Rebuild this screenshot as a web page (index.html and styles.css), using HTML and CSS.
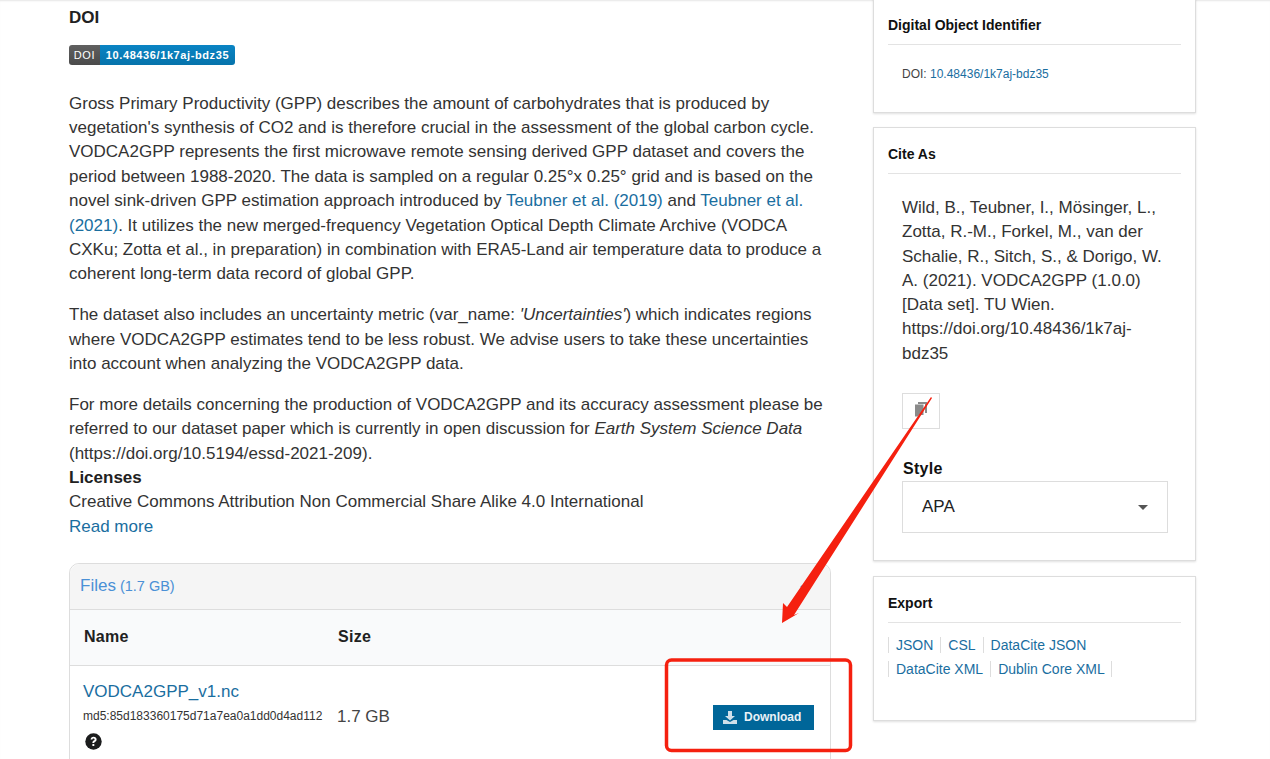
FILE: index.html
```html
<!DOCTYPE html>
<html lang="en">
  <head>
    <meta charset="UTF-8" />
    <title>VODCA2GPP</title>
    <link rel="stylesheet" href="styles.css">
  </head>
  <body>
    <div class="page">
      <main class="main">
        <h2 class="doi-title">DOI</h2>
        <div class="badge"><span class="badge-key">DOI</span><span class="badge-val">10.48436/1k7aj-bdz35</span></div>

        <p>Gross Primary Productivity (GPP) describes the amount of carbohydrates that is produced by vegetation's synthesis of CO2 and is therefore crucial in the assessment of the global carbon cycle. VODCA2GPP represents the first microwave remote sensing derived GPP dataset and covers the period between 1988-2020. The data is sampled on a regular 0.25°x 0.25° grid and is based on the novel sink-driven GPP estimation approach introduced by <a href="#">Teubner et al. (2019)</a> and <a href="#">Teubner et al. (2021)</a>. It utilizes the new merged-frequency Vegetation Optical Depth Climate Archive (VODCA CXKu; Zotta et al., in preparation) in combination with ERA5-Land air temperature data to produce a coherent long-term data record of global GPP.</p>
        <p>The dataset also includes an uncertainty metric (var_name: <em>'Uncertainties'</em>) which indicates regions where VODCA2GPP estimates tend to be less robust. We advise users to take these uncertainties into account when analyzing the VODCA2GPP data.</p>
        <p class="tight">For more details concerning the production of VODCA2GPP and its accuracy assessment please be referred to our dataset paper which is currently in open discussion for <em>Earth System Science Data</em> (https://doi.org/10.5194/essd-2021-209).</p>
        <div class="license-title">Licenses</div>
        <div class="license-text">Creative Commons Attribution Non Commercial Share Alike 4.0 International</div>
        <a class="read-more" href="#">Read more</a>

        <section class="files">
          <div class="files-head">
            <span class="files-title">Files</span> <span class="files-size">(1.7 GB)</span>
            <svg class="chevron" width="10" height="6" viewBox="0 0 10 6"><path d="M1 1l4 4 4-4" fill="none" stroke="#4a90d6" stroke-width="2"/></svg>
          </div>
          <div class="files-cols">
            <div class="col-name">Name</div>
            <div class="col-size">Size</div>
          </div>
          <div class="files-row">
            <div class="col-name">
              <a class="file-link" href="#">VODCA2GPP_v1.nc</a>
              <div class="md5">md5:85d183360175d71a7ea0a1dd0d4ad112</div>
              <svg class="help" width="17" height="17" viewBox="0 0 17 17">
                <circle cx="8.5" cy="8.5" r="8.2" fill="#1b1c1d"/>
                <path d="M5.6 6.6c0-1.700 1.300-2.800 3-2.800s3 1 3 2.600c0 1.200-.7 1.800-1.500 2.300-.6.4-.8.6-.8 1.200H7.400c0-1.200.4-1.800 1.200-2.300.7-.4 1-.7 1-1.200 0-.6-.5-1-1.100-1-.7 0-1.100.5-1.100 1.200z" fill="#fff"/>
                <rect x="7.400" y="11" width="1.900" height="2" fill="#fff"/>
              </svg>
            </div>
            <div class="col-size file-size">1.7 GB</div>
            <a class="download" href="#">
              <svg width="14" height="13" viewBox="0 0 14 13"><path d="M5 0h4v5h3L7 9.500 2 5h3z" fill="#cfe0ea"/><path d="M0 9h3.500L7 11l3.500-2H14v4H0z" fill="#cfe0ea"/></svg>
              Download
            </a>
          </div>
        </section>
      </main>

      <aside class="side">
        <section class="card card-doi">
          <h3 class="card-title">Digital Object Identifier</h3>
          <div class="doi-line">DOI: <a href="#">10.48436/1k7aj-bdz35</a></div>
        </section>
        <section class="card card-cite">
          <h3 class="card-title">Cite As</h3>
          <div class="citation">Wild, B., Teubner, I., Mösinger, L., Zotta, R.-M., Forkel, M., van der Schalie, R., Sitch, S., &amp; Dorigo, W. A. (2021). VODCA2GPP (1.0.0) [Data set]. TU Wien. https://doi.org/10.48436/1k7aj-bdz35</div>
          <button class="copy" type="button" aria-label="Copy">
            <svg width="14" height="15" viewBox="0 0 14 15"><path d="M4 0h9v11h-2V2H4z" fill="#8a8a8a"/><path d="M1 2.500h8.500V13H5l-1.500 1.500H1z" fill="#8a8a8a"/></svg>
          </button>
          <label class="style-label">Style</label>
          <div class="select"><span>APA</span><i class="caret"></i></div>
        </section>
        <section class="card card-export">
          <h3 class="card-title">Export</h3>
          <ul class="export-list">
            <li><a href="#">JSON</a></li>
            <li><a href="#">CSL</a></li>
            <li><a href="#">DataCite JSON</a></li>
            <li><a href="#">DataCite XML</a></li>
            <li><a href="#">Dublin Core XML</a></li>
          </ul>
        </section>
      </aside>
    </div>

    <!-- red markup drawn over the screenshot -->
    <svg class="markup" width="1270" height="759" viewBox="0 0 1270 759">
      <rect x="666.500" y="660" width="184" height="90.500" rx="5" fill="none" stroke="#f5200f" stroke-width="3.500"/>
      <path d="M931 397L932 398 794 615 799 613 782 623 783 603 787 607z" fill="#f5200f"/>
    </svg>
  </body>
</html>
```

FILE: styles.css
```css
* {
  box-sizing: border-box;
}

html,
body {
  height: 759px;
  margin: 0;
  overflow: hidden;
}

body {
  font-family: "Liberation Sans", Arial, sans-serif;
  font-size: 17px;
  color: #333;
  background-color: #fff;
  box-shadow: inset 0 2px 2px -1px rgba(0, 0, 0, 0.1);
}

a {
  color: #1a6e9f;
  text-decoration: none;
}

.page {
  display: flex;
  align-items: flex-start;
  padding-left: 69px;
}

/* main column */
.main {
  width: 762px;
  padding-top: 9px;
}

.doi-title {
  margin: 0 0 18px;
  font-size: 17px;
  line-height: 18px;
  font-weight: bold;
  color: #212121;
}

.badge {
  display: flex;
  width: 166px;
  height: 20px;
  margin-bottom: 26.5px;
  border-radius: 3px;
  overflow: hidden;
  font-size: 11px;
  line-height: 20px;
  color: #fff;
  letter-spacing: 0.6px;
}

.badge-key {
  width: 31px;
  text-align: center;
  background: linear-gradient(#606060, #4a4a4a);
}

.badge-val {
  width: 135px;
  text-align: center;
  font-weight: bold;
  background: linear-gradient(#0a84c4, #0673ab);
}

p {
  margin: 0 0 16.5px;
  line-height: 24.4px;
}

p.tight {
  margin-bottom: -0.5px;
}

.license-title {
  font-weight: bold;
  line-height: 24.4px;
  color: #212121;
}

.license-text,
.read-more {
  display: block;
  line-height: 24.4px;
}

/* files table */
.files {
  margin-top: 24px;
  border: 1px solid #ddd;
  border-radius: 10px 10px 0 0;
  height: 400px;
}

.files-head {
  display: flex;
  align-items: baseline;
  gap: 4px;
  height: 46px;
  padding: 12px 10px 0;
  background-color: #f5f5f5;
  border-bottom: 1px solid #ddd;
  border-radius: 10px 10px 0 0;
  color: #4a90d6;
}

.files-title {
  font-size: 17px;
}

.files-size {
  font-size: 14.5px;
}

.chevron {
  margin-left: auto;
  margin-right: 10px;
}

.files-cols {
  display: flex;
  align-items: center;
  height: 56px;
  background-color: #f9fafb;
  border-bottom: 1px solid #ddd;
  font-weight: bold;
  font-size: 16px;
  letter-spacing: 0.3px;
  color: #212121;
}

.col-name {
  width: 267px;
  padding-left: 13px;
}

.files-cols .col-name {
  width: 268px;
  padding-left: 14px;
}

.col-size {
  width: 180px;
}

.files-row {
  display: flex;
  padding-top: 15px;
}

.file-link {
  display: block;
  line-height: 21px;
}

.md5 {
  margin-top: 6px;
  font-size: 12px;
  line-height: 16px;
  white-space: nowrap;
}

.help {
  display: block;
  margin: 9px 0 0 2px;
}

.file-size {
  padding-top: 26px;
  color: #444;
}

.download {
  display: flex;
  align-items: center;
  gap: 7px;
  flex-shrink: 0;
  width: 101px;
  height: 25px;
  margin: 24px 0 0 196px;
  padding: 0 13px 0 10px;
  background-color: #006699;
  color: #eaf2f7;
  font-size: 12px;
  font-weight: bold;
}

.download svg {
  flex-shrink: 0;
}

/* sidebar */
.side {
  display: flex;
  flex-direction: column;
  width: 323px;
  margin-left: 42px;
  margin-top: -20px;
  gap: 14px;
}

.card {
  padding: 0 14px;
  border: 1px solid #ddd;
  box-shadow: 0 1px 2px rgba(0, 0, 0, 0.12);
  background-color: #fff;
}

.card-doi {
  height: 133px;
  padding-top: 37px;
}

.card-cite {
  height: 434px;
  padding-top: 19px;
}

.card-export {
  height: 145px;
  margin-top: 1px;
  padding-top: 19px;
}

.card-title {
  margin: 0;
  padding-bottom: 11px;
  border-bottom: 1px solid #e3e3e3;
  font-size: 14px;
  line-height: 15px;
  font-weight: bold;
  color: #111;
}

.doi-line {
  margin: 21px 0 0 14px;
  font-size: 12px;
  line-height: 16px;
  color: #444;
}

.citation {
  width: 266px;
  margin: 22px 0 0 14px;
  line-height: 24.3px;
}

.copy {
  display: block;
  width: 38px;
  height: 36px;
  margin: 27px 0 0 14px;
  padding: 0;
  border: 1px solid #ddd;
  background: #fff;
}

.style-label {
  display: block;
  margin: 31px 0 3px 15px;
  font-weight: bold;
  font-size: 16px;
  letter-spacing: 0.3px;
  line-height: 18px;
  color: #111;
}

.select {
  display: flex;
  align-items: center;
  justify-content: space-between;
  width: 266px;
  height: 52px;
  margin-left: 14px;
  padding: 0 19px;
  border: 1px solid #ddd;
  color: #222;
}

.caret {
  border-top: 5px solid #555;
  border-left: 5px solid transparent;
  border-right: 5px solid transparent;
}

.export-list {
  display: flex;
  flex-wrap: wrap;
  width: 240px;
  margin: 10px 0 0;
  padding: 0;
  list-style: none;
  font-size: 14px;
  line-height: 24px;
}

.export-list li {
  padding: 0 7px 0 8px;
  background: linear-gradient(#ddd, #ddd) left 4px / 1px 16px no-repeat;
}

.export-list li:nth-child(5) {
  background:
    linear-gradient(#ddd, #ddd) left 4px / 1px 16px no-repeat,
    linear-gradient(#ddd, #ddd) right 4px / 1px 16px no-repeat;
}

.markup {
  position: absolute;
  left: 0;
  top: 0;
  pointer-events: none;
}
```
